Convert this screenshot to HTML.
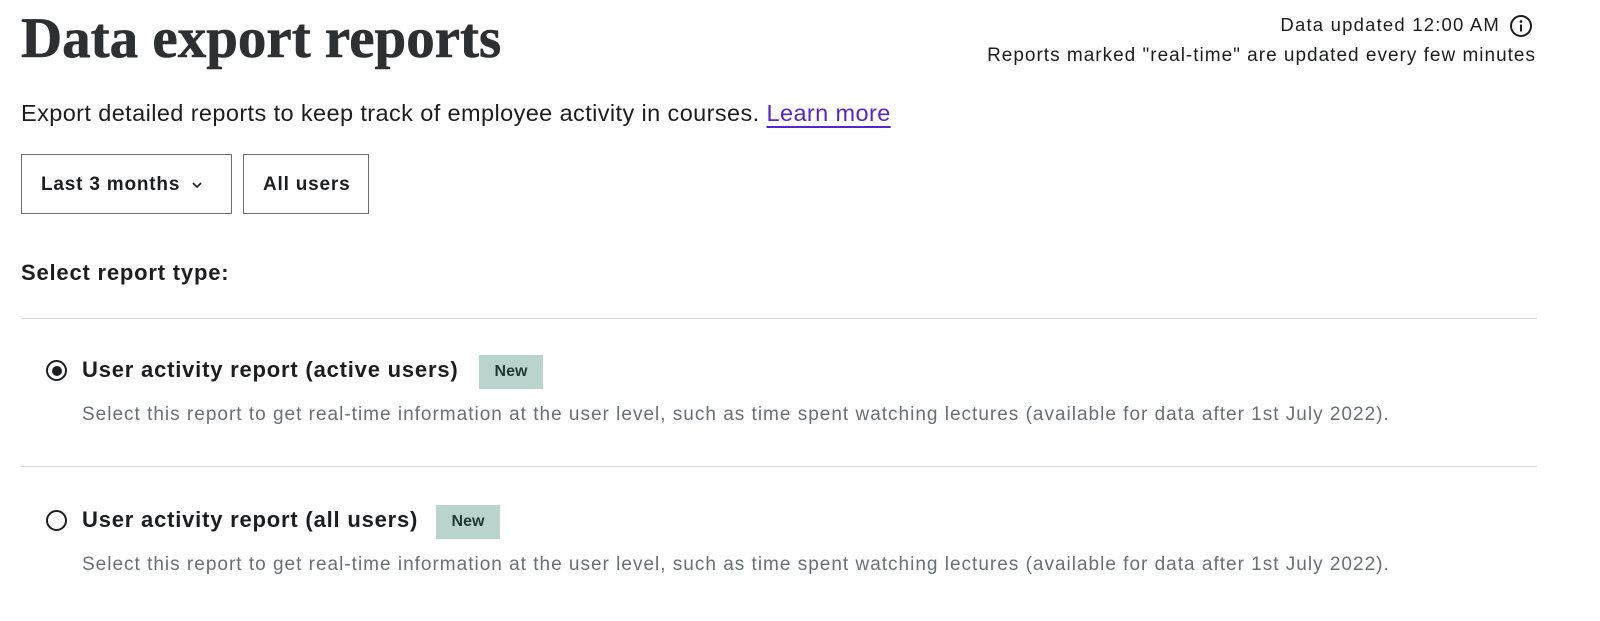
<!DOCTYPE html>
<html><head><meta charset="utf-8"><style>
body{margin:0;width:1600px;height:621px;background:#fff;font-family:"Liberation Sans",sans-serif;color:#1c1d1f;position:relative;overflow:hidden}
.abs{position:absolute;white-space:nowrap}
h1{position:absolute;left:21px;top:6px;margin:0;font-family:"Liberation Serif",serif;font-weight:bold;font-size:57px;letter-spacing:0px;color:#2d2f31;-webkit-text-stroke:0.6px #2d2f31}
.btn{position:absolute;top:154px;height:60px;border:1px solid #6a6f73;box-sizing:border-box;font-weight:bold;font-size:19px;line-height:60px;padding-left:19px;letter-spacing:0.8px}
.hr{position:absolute;left:21px;width:1516px;height:1px;background:#d1d7dc}
.t{font-weight:bold;font-size:22px;letter-spacing:0.8px}
.tag{position:absolute;background:#b8d4cc;font-weight:bold;font-size:16px;height:34px;line-height:34px;text-align:center;color:#1e3a32}
.d{font-size:19px;color:#6a6f73;letter-spacing:1px}
.r{position:absolute;left:46px;width:21px;height:21px;border:2px solid #1c1d1f;border-radius:50%;box-sizing:border-box}
</style></head><body>
<h1>Data export reports</h1>
<div class="abs" style="right:100px;top:14px;font-size:18.5px;letter-spacing:1.2px">Data updated 12:00 AM</div>
<svg class="abs" style="left:1509px;top:14px" width="24" height="24" viewBox="0 0 24 24"><circle cx="12" cy="12" r="10" fill="none" stroke="#1c1d1f" stroke-width="2"/><circle cx="12" cy="7.5" r="1.4" fill="#1c1d1f"/><rect x="11" y="10.5" width="2" height="7" fill="#1c1d1f"/></svg>
<div class="abs" style="right:64px;top:45px;font-size:19px;letter-spacing:1px">Reports marked "real-time" are updated every few minutes</div>
<div class="abs" style="left:21px;top:100px;font-size:23.5px;letter-spacing:0.4px">Export detailed reports to keep track of employee activity in courses. <span style="color:#5624d0;text-decoration:underline;text-underline-offset:5px">Learn more</span></div>
<div class="btn" style="left:21px;width:211px">Last 3 months <svg width="14" height="10" viewBox="0 0 14 10" style="margin-left:4px"><path d="M3 3l4 4 4-4" fill="none" stroke="#1c1d1f" stroke-width="1.6"/></svg></div>
<div class="btn" style="left:243px;width:126px">All users</div>
<div class="abs" style="left:21px;top:260px;font-weight:bold;font-size:22px;letter-spacing:0.8px">Select report type:</div>
<div class="hr" style="top:318px"></div>
<div class="r" style="top:360px"><div style="position:absolute;left:3.5px;top:3.5px;width:10px;height:10px;border-radius:50%;background:#1c1d1f"></div></div>
<div class="abs t" style="left:82px;top:357px">User activity report (active users)</div>
<div class="tag" style="left:479px;top:355px;width:64px">New</div>
<div class="abs d" style="left:82px;top:404px">Select this report to get real-time information at the user level, such as time spent watching lectures (available for data after 1st July 2022).</div>
<div class="hr" style="top:466px"></div>
<div class="r" style="top:510px"></div>
<div class="abs t" style="left:82px;top:507px">User activity report (all users)</div>
<div class="tag" style="left:436px;top:505px;width:64px">New</div>
<div class="abs d" style="left:82px;top:554px">Select this report to get real-time information at the user level, such as time spent watching lectures (available for data after 1st July 2022).</div>
</body></html>
